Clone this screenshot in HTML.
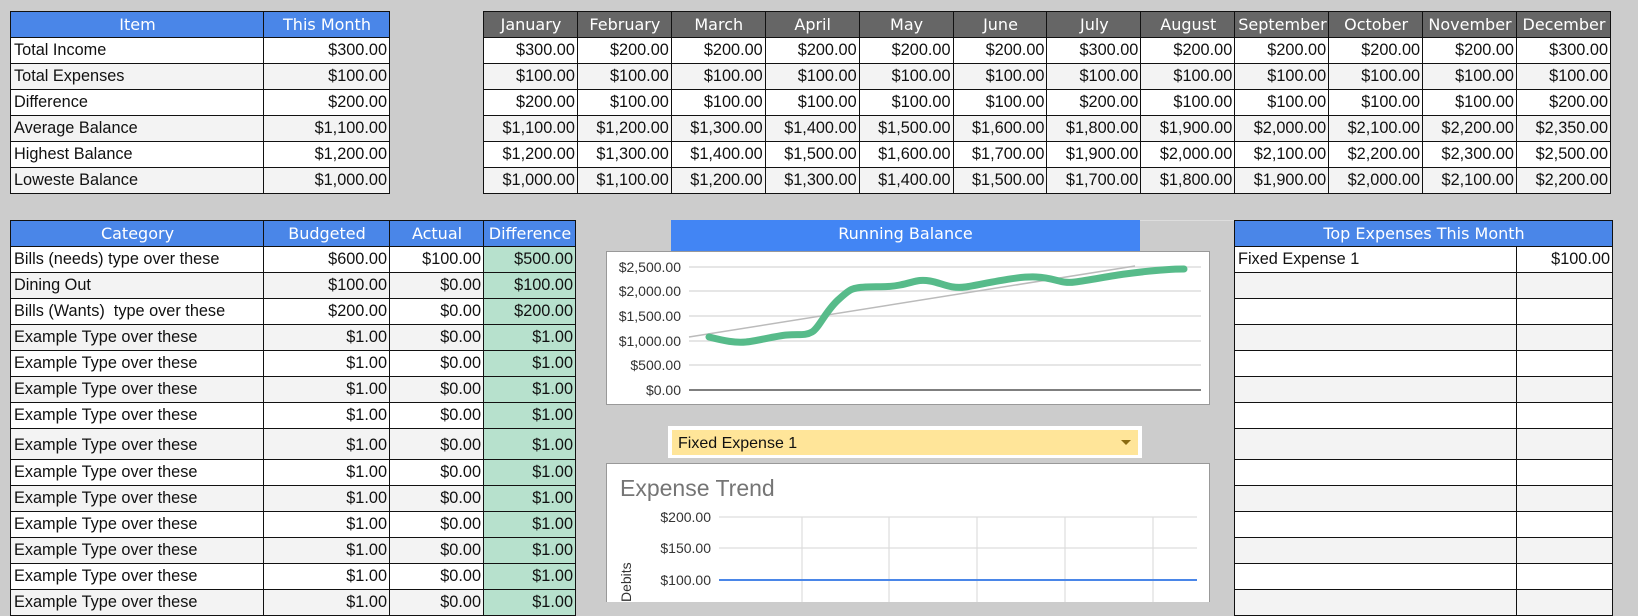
<!DOCTYPE html>
<html><head><meta charset="utf-8"><style>
body{margin:0;width:1638px;height:602px;background:#cccccc;overflow:hidden;position:relative;font-family:"Liberation Sans",Arial,sans-serif;}
table{position:absolute;border-collapse:collapse;font-size:16.3px;color:#111;table-layout:fixed;}
td,th{border:1px solid #111;padding:0 2px 0 3px;height:25px;white-space:nowrap;overflow:hidden;}
th{font-family:"Comic Sans MS","DejaVu Sans",cursive;font-weight:normal;color:#fff;font-size:16px;background:#4a86e8;text-align:center;}
td.r{text-align:right;}
tr:nth-child(odd) td{background:#f3f3f3;}
tr:nth-child(even) td{background:#fff;}
.m th{background:#666;}
td.g{background:#b7e1cd!important;}
.tall td{height:28px;padding-top:2px;}
</style></head><body>

<table style="left:10px;top:11px;width:379px">
<colgroup><col style="width:253px"><col style="width:126px"></colgroup>
<tr><th>Item</th><th>This Month</th></tr>
<tr><td>Total Income</td><td class="r">$300.00</td></tr>
<tr><td>Total Expenses</td><td class="r">$100.00</td></tr>
<tr><td>Difference</td><td class="r">$200.00</td></tr>
<tr><td>Average Balance</td><td class="r">$1,100.00</td></tr>
<tr><td>Highest Balance</td><td class="r">$1,200.00</td></tr>
<tr><td>Loweste Balance</td><td class="r">$1,000.00</td></tr>
</table>

<table class="m" style="left:483px;top:11px;width:1128px">
<tr><th>January</th><th>February</th><th>March</th><th>April</th><th>May</th><th>June</th><th>July</th><th>August</th><th>September</th><th>October</th><th>November</th><th>December</th></tr>
<tr><td class="r">$300.00</td><td class="r">$200.00</td><td class="r">$200.00</td><td class="r">$200.00</td><td class="r">$200.00</td><td class="r">$200.00</td><td class="r">$300.00</td><td class="r">$200.00</td><td class="r">$200.00</td><td class="r">$200.00</td><td class="r">$200.00</td><td class="r">$300.00</td></tr>
<tr><td class="r">$100.00</td><td class="r">$100.00</td><td class="r">$100.00</td><td class="r">$100.00</td><td class="r">$100.00</td><td class="r">$100.00</td><td class="r">$100.00</td><td class="r">$100.00</td><td class="r">$100.00</td><td class="r">$100.00</td><td class="r">$100.00</td><td class="r">$100.00</td></tr>
<tr><td class="r">$200.00</td><td class="r">$100.00</td><td class="r">$100.00</td><td class="r">$100.00</td><td class="r">$100.00</td><td class="r">$100.00</td><td class="r">$200.00</td><td class="r">$100.00</td><td class="r">$100.00</td><td class="r">$100.00</td><td class="r">$100.00</td><td class="r">$200.00</td></tr>
<tr><td class="r">$1,100.00</td><td class="r">$1,200.00</td><td class="r">$1,300.00</td><td class="r">$1,400.00</td><td class="r">$1,500.00</td><td class="r">$1,600.00</td><td class="r">$1,800.00</td><td class="r">$1,900.00</td><td class="r">$2,000.00</td><td class="r">$2,100.00</td><td class="r">$2,200.00</td><td class="r">$2,350.00</td></tr>
<tr><td class="r">$1,200.00</td><td class="r">$1,300.00</td><td class="r">$1,400.00</td><td class="r">$1,500.00</td><td class="r">$1,600.00</td><td class="r">$1,700.00</td><td class="r">$1,900.00</td><td class="r">$2,000.00</td><td class="r">$2,100.00</td><td class="r">$2,200.00</td><td class="r">$2,300.00</td><td class="r">$2,500.00</td></tr>
<tr><td class="r">$1,000.00</td><td class="r">$1,100.00</td><td class="r">$1,200.00</td><td class="r">$1,300.00</td><td class="r">$1,400.00</td><td class="r">$1,500.00</td><td class="r">$1,700.00</td><td class="r">$1,800.00</td><td class="r">$1,900.00</td><td class="r">$2,000.00</td><td class="r">$2,100.00</td><td class="r">$2,200.00</td></tr>
</table>

<table style="left:10px;top:220px;width:565px">
<colgroup><col style="width:253px"><col style="width:126px"><col style="width:94px"><col style="width:92px"></colgroup>
<tr><th>Category</th><th>Budgeted</th><th>Actual</th><th>Difference</th></tr>
<tr><td>Bills (needs) type over these</td><td class="r">$600.00</td><td class="r">$100.00</td><td class="r g">$500.00</td></tr>
<tr><td>Dining Out</td><td class="r">$100.00</td><td class="r">$0.00</td><td class="r g">$100.00</td></tr>
<tr><td>Bills (Wants)&nbsp; type over these</td><td class="r">$200.00</td><td class="r">$0.00</td><td class="r g">$200.00</td></tr>
<tr><td>Example Type over these</td><td class="r">$1.00</td><td class="r">$0.00</td><td class="r g">$1.00</td></tr>
<tr><td>Example Type over these</td><td class="r">$1.00</td><td class="r">$0.00</td><td class="r g">$1.00</td></tr>
<tr><td>Example Type over these</td><td class="r">$1.00</td><td class="r">$0.00</td><td class="r g">$1.00</td></tr>
<tr><td>Example Type over these</td><td class="r">$1.00</td><td class="r">$0.00</td><td class="r g">$1.00</td></tr>
<tr class="tall"><td>Example Type over these</td><td class="r">$1.00</td><td class="r">$0.00</td><td class="r g">$1.00</td></tr>
<tr><td>Example Type over these</td><td class="r">$1.00</td><td class="r">$0.00</td><td class="r g">$1.00</td></tr>
<tr><td>Example Type over these</td><td class="r">$1.00</td><td class="r">$0.00</td><td class="r g">$1.00</td></tr>
<tr><td>Example Type over these</td><td class="r">$1.00</td><td class="r">$0.00</td><td class="r g">$1.00</td></tr>
<tr><td>Example Type over these</td><td class="r">$1.00</td><td class="r">$0.00</td><td class="r g">$1.00</td></tr>
<tr><td>Example Type over these</td><td class="r">$1.00</td><td class="r">$0.00</td><td class="r g">$1.00</td></tr>
<tr><td>Example Type over these</td><td class="r">$1.00</td><td class="r">$0.00</td><td class="r g">$1.00</td></tr>
</table>

<table style="left:1234px;top:220px;width:378px">
<colgroup><col style="width:282px"><col style="width:96px"></colgroup>
<tr><th colspan="2">Top Expenses This Month</th></tr>
<tr><td>Fixed Expense 1</td><td class="r">$100.00</td></tr>
<tr><td></td><td></td></tr><tr><td></td><td></td></tr><tr><td></td><td></td></tr>
<tr><td></td><td></td></tr><tr><td></td><td></td></tr><tr><td></td><td></td></tr>
<tr class="tall"><td></td><td></td></tr>
<tr><td></td><td></td></tr><tr><td></td><td></td></tr><tr><td></td><td></td></tr>
<tr><td></td><td></td></tr><tr><td></td><td></td></tr><tr><td></td><td></td></tr>
</table>

<div style="position:absolute;left:1140px;top:220px;width:94px;height:1px;background:#ddd"></div>
<div style="position:absolute;left:671px;top:220px;width:469px;height:31px;background:#4285f4;color:#fff;font-family:'Comic Sans MS','DejaVu Sans',cursive;font-size:16px;text-align:center;line-height:28px">Running Balance</div>

<svg style="position:absolute;left:0;top:0" width="1638" height="602">
<rect x="606.5" y="251.5" width="603" height="153" fill="#fff" stroke="#999"/>
<g stroke="#ddd" stroke-width="1.5">
<line x1="689" y1="267" x2="1201" y2="267"/><line x1="689" y1="291" x2="1201" y2="291"/>
<line x1="689" y1="316" x2="1201" y2="316"/><line x1="689" y1="341" x2="1201" y2="341"/>
<line x1="689" y1="365" x2="1201" y2="365"/></g>
<line x1="689" y1="390" x2="1201" y2="390" stroke="#555" stroke-width="1.5"/>
<g font-family="Liberation Sans,Arial,sans-serif" font-size="14" fill="#333" text-anchor="end">
<text x="681" y="272">$2,500.00</text><text x="681" y="296">$2,000.00</text><text x="681" y="321">$1,500.00</text>
<text x="681" y="346">$1,000.00</text><text x="681" y="370">$500.00</text><text x="681" y="395">$0.00</text></g>
<line x1="689" y1="337" x2="1135" y2="266" stroke="#bbb" stroke-width="1.5"/>
<path d="M709 337 C725 341,735 343,746 342 S775 336,787 335 S805 336,812 332 S825 312,838 300 S852 288,866 287 S885 288,900 285 S918 279,930 281 S950 289,965 287 S1015 276,1036 277 S1060 284,1075 282 S1110 276,1125 274 S1165 269,1184 269" fill="none" stroke="#57bb8a" stroke-width="7" stroke-linecap="round"/>
<rect x="668" y="426" width="474" height="32" fill="#fff"/>
<rect x="672" y="430" width="466" height="25" fill="#ffe599"/>
<text x="678" y="448" font-family="Liberation Sans,Arial,sans-serif" font-size="16" fill="#111">Fixed Expense 1</text>
<path d="M1121 440 L1131 440 L1126 445 Z" fill="#8a6a10"/>
<rect x="606.5" y="463.5" width="603" height="150" fill="#fff" stroke="#999"/>
<text x="620" y="496" font-family="Liberation Sans,Arial,sans-serif" font-size="23" fill="#757575">Expense Trend</text>
<g stroke="#ddd" stroke-width="1.2">
<line x1="719" y1="517" x2="1197" y2="517"/><line x1="719" y1="548" x2="1197" y2="548"/>
<line x1="802" y1="517" x2="802" y2="602"/><line x1="889" y1="517" x2="889" y2="602"/>
<line x1="977" y1="517" x2="977" y2="602"/><line x1="1065" y1="517" x2="1065" y2="602"/>
<line x1="1153" y1="517" x2="1153" y2="602"/></g>
<line x1="719" y1="580" x2="1197" y2="580" stroke="#4a86e8" stroke-width="2"/>
<g font-family="Liberation Sans,Arial,sans-serif" font-size="14" fill="#333" text-anchor="end">
<text x="711" y="522">$200.00</text><text x="711" y="553">$150.00</text><text x="711" y="585">$100.00</text></g>
<text transform="translate(631,602) rotate(-90)" font-family="Liberation Sans,Arial,sans-serif" font-size="14" fill="#333">Debits</text>
</svg>
</body></html>
